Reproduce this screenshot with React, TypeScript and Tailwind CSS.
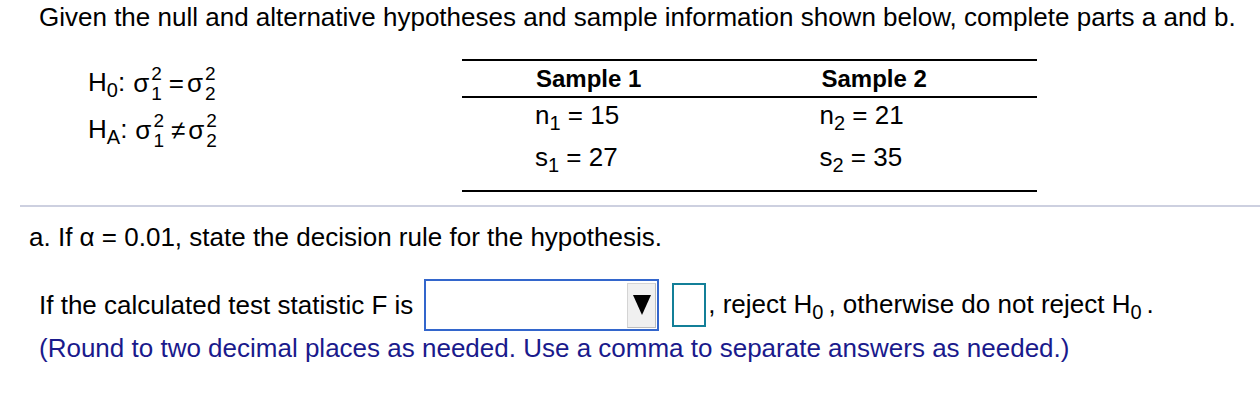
import React from 'react';

const font = { fontFamily: '"Liberation Sans", Arial, sans-serif' };

// σ with stacked superscript 2 and subscript index
function Sigma({ sub }: { sub: string }) {
    return (
        <span className="inline-flex items-center">
            <span>σ</span>
            <span className="inline-flex flex-col text-[19px] leading-[20px] ml-[2px] mt-[2px]">
                <span>2</span>
                <span>{sub}</span>
            </span>
        </span>
    );
}

function Sub({ children, className = '' }: { children: React.ReactNode; className?: string }) {
    return <span className={`text-[20px] relative top-[6px] ${className}`}>{children}</span>;
}

export default function App() {
    return (
        <div className="w-[1260px] h-[420px] bg-white text-black text-[26px] leading-[30px] overflow-hidden" style={font}>
            {/* Title */}
            <p className="pl-[39px] pt-[2px]">
                Given the null and alternative hypotheses and sample information shown below, complete parts a and b.
            </p>

            {/* Hypotheses + table */}
            <div className="flex mt-[27px]">
                <div className="pl-[88px] w-[462px] flex flex-col gap-[6px] pt-[3px]">
                    <div className="flex items-center h-[41px]">
                        <span>H<Sub>0</Sub>:</span>
                        <span className="ml-[8px]"><Sigma sub="1" /></span>
                        <span className="ml-[7px]">=</span>
                        <span className="ml-[3px]"><Sigma sub="2" /></span>
                    </div>
                    <div className="flex items-center h-[41px]">
                        <span>H<Sub>A</Sub>:</span>
                        <span className="ml-[8px]"><Sigma sub="1" /></span>
                        <span className="ml-[7px]">≠</span>
                        <span className="ml-[3px]"><Sigma sub="2" /></span>
                    </div>
                </div>
                <div className="w-[575px] border-t-2 border-b-2 border-black">
                    <div className="grid grid-cols-2 border-b-2 border-black h-[37px] items-center font-bold text-[24px]">
                        <span className="pl-[74px]">Sample 1</span>
                        <span className="pl-[72px]">Sample 2</span>
                    </div>
                    <div className="grid grid-cols-2 h-[36px] items-center">
                        <span className="pl-[73px]">n<Sub>1</Sub> = 15</span>
                        <span className="pl-[70px]">n<Sub>2</Sub> = 21</span>
                    </div>
                    <div className="grid grid-cols-2 h-[56px] items-start pt-[8px]">
                        <span className="pl-[73px]">s<Sub>1</Sub> = 27</span>
                        <span className="pl-[70px]">s<Sub>2</Sub> = 35</span>
                    </div>
                </div>
            </div>

            {/* Divider */}
            <div className="ml-[20px] mt-[13px] h-[2px] bg-[#cdd0e0]" />

            {/* Part a */}
            <p className="pl-[29px] mt-[15px]">
                a. If α = 0.01, state the decision rule for the hypothesis.
            </p>

            {/* Answer row */}
            <div className="flex items-center pl-[39px] mt-[27px]">
                <span>If the calculated test statistic F is</span>
                <div className="ml-[11px] w-[235px] h-[52px] border-2 border-[#3366cc] flex items-center justify-end pr-[1px]">
                    <div className="w-[29px] h-[45px] bg-[#f0f0f0] border border-[#d4d4d4] border-r-[#bdbdbd] border-b-[#bdbdbd] flex items-center justify-center">
                        <svg width="18" height="22" viewBox="0 0 18 22">
                            <polygon points="0,1 18,1 9,21" fill="#000" />
                        </svg>
                    </div>
                </div>
                <div className="ml-[13px] w-[34px] h-[44px] border-2 border-[#137f98]" />
                <span className="ml-[2px]">
                    , reject H<Sub className="pr-[5px]">0</Sub>, otherwise do not reject H<Sub className="pr-[5px]">0</Sub>.
                </span>
            </div>

            {/* Note */}
            <p className="pl-[39px] mt-[2px] text-[#1a1a8c]">
                (Round to two decimal places as needed. Use a comma to separate answers as needed.)
            </p>
        </div>
    );
}
